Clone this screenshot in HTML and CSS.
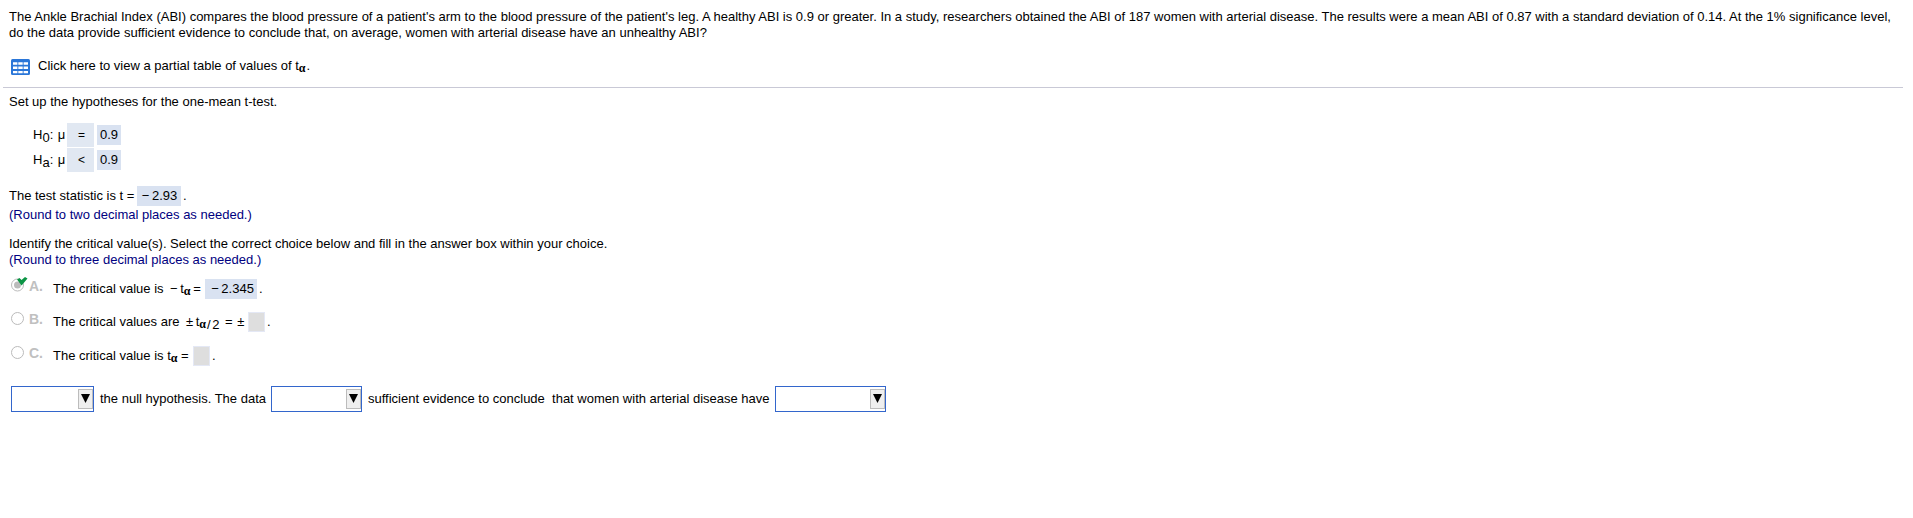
FILE: index.html
```html
<!DOCTYPE html>
<html lang="en">
  <head>
    <meta charset="utf-8">
    <title>One-mean t-test</title>
    <link rel="stylesheet" href="styles.css">
  </head>
  <body>
    <div class="problem">
      <p>The Ankle Brachial Index (ABI) compares the blood pressure of a patient's arm to the blood pressure of the patient's leg. A healthy ABI is 0.9 or greater. In a study, researchers obtained the ABI of 187 women with arterial disease. The results were a mean ABI of 0.87 with a standard deviation of 0.14. At the 1% significance level,<br>do the data provide sufficient evidence to conclude that, on average, women with arterial disease have an unhealthy ABI?</p>
      <div class="table-link">
        <svg class="table-icon" width="19" height="16" viewBox="0 0 19 16">
          <rect width="19" height="16" rx="1.5" fill="#2a76d8"/>
          <path fill="#fff" d="M2 3.300h4.400v2.400H2zM7.300 3.300h4.400v2.400H7.300zM12.600 3.300H17v2.400h-4.400zM2 7.600h4.400V10H2zM7.300 7.600h4.400V10H7.300zM12.600 7.600H17V10h-4.400zM2 11.900h4.400v2.400H2zM7.300 11.900h4.400v2.400H7.300zM12.600 11.900H17v2.400h-4.400z"/>
        </svg>
        <span>Click here to view a partial table of values of t<span class="sub alpha">α</span><span class="dot">.</span></span>
      </div>
    </div>

    <div class="work">
      <p>Set up the hypotheses for the one-mean t-test.</p>

      <div class="hypotheses">
        <div class="hyp">
          <span class="hyp-name">H<span class="sub">0</span>: μ</span>
          <span class="sign">=</span>
          <span class="answer">0.9</span>
        </div>
        <div class="hyp">
          <span class="hyp-name">H<span class="sub">a</span>: μ</span>
          <span class="sign">&lt;</span>
          <span class="answer">0.9</span>
        </div>
      </div>

      <div class="statistic">
        <span class="stat-text">The test statistic is t =</span>
        <span class="answer stat-answer">− 2.93</span>
        <span class="end">.</span>
      </div>
      <p class="hint">(Round to two decimal places as needed.)</p>

      <p class="identify">Identify the critical value(s). Select the correct choice below and fill in the answer box within your choice.</p>
      <p class="hint three">(Round to three decimal places as needed.)</p>

      <div class="choices">
        <div class="choice">
          <svg class="radio" width="18" height="18" viewBox="0 0 18 18">
            <circle cx="7.500" cy="9" r="6" fill="#fff" stroke="#bbb"/>
            <circle cx="7.500" cy="9" r="3.500" fill="#bbb"/>
            <path d="M7 3.500l2.500-1.600 2 2.200L15 1l2.500 1.400L11.600 9.500z" fill="#0b9444"/>
          </svg>
          <b class="letter">A.</b>
          <span class="choice-a">The critical value is</span>
          <span class="math-a">− t<span class="sub alpha">α</span> =</span>
          <span class="answer crit-answer">− 2.345</span>
          <span class="end">.</span>
        </div>
        <div class="choice choice-two">
          <svg class="radio" width="18" height="18" viewBox="0 0 18 18">
            <circle cx="7.500" cy="9.500" r="6" fill="#fff" stroke="#bbb"/>
          </svg>
          <b class="letter">B.</b>
          <span class="choice-b">The critical values are</span>
          <span class="math-b">± t<span class="sub alpha">α</span><span class="sub half">/2</span></span>
          <span class="equals-b">= ±</span>
          <span class="blank"></span>
          <span class="end">.</span>
        </div>
        <div class="choice">
          <svg class="radio" width="18" height="18" viewBox="0 0 18 18">
            <circle cx="7.500" cy="9.500" r="6" fill="#fff" stroke="#bbb"/>
          </svg>
          <b class="letter">C.</b>
          <span class="choice-c">The critical value is t<span class="sub alpha">α</span> =</span>
          <span class="blank"></span>
          <span class="end">.</span>
        </div>
      </div>

      <div class="conclusion">
        <span class="drop reject"><span class="arrow"><svg width="9" height="9"><path d="M0 0h9L4.500 9z"/></svg></span></span>
        <span class="null-text">the null hypothesis. The data</span>
        <span class="drop data"><span class="arrow"><svg width="9" height="9"><path d="M0 0h9L4.500 9z"/></svg></span></span>
        <span class="evidence-text">sufficient evidence to conclude&nbsp; that women with arterial disease have</span>
        <span class="drop abi"><span class="arrow"><svg width="9" height="9"><path d="M0 0h9L4.500 9z"/></svg></span></span>
      </div>
    </div>
  </body>
</html>
```
FILE: styles.css
```css
body {
  margin: 0;
  background: #fff;
  color: #000;
  font: 13px/16px "Liberation Sans", Arial, sans-serif;
  white-space: nowrap;
}
p {
  margin: 0;
}
.problem {
  height: 78px;
  margin: 0 10px 0 3px;
  padding: 9px 0 0 6px;
  border-bottom: 1px solid #c9c9d6;
}
.table-link {
  display: flex;
  margin-top: 17px;
}
.table-icon {
  margin: 1px 8px 0 2px;
}
.sub {
  position: relative;
  top: 3px;
}
.alpha {
  top: 2px;
  font: bold 12px/1 "Liberation Serif", serif;
}
.dot {
  margin-left: 1px;
}
.work {
  padding: 6px 0 0 9px;
}
.hypotheses {
  margin: 13px 0 0 24px;
}
.hyp {
  display: flex;
  height: 24px;
  margin-bottom: 1px;
  line-height: 24px;
}
.hyp-name {
  width: 34px;
  word-spacing: 1px;
}
.sign {
  box-sizing: border-box;
  width: 27px;
  height: 24px;
  margin-right: 3px;
  padding-left: 2px;
  background: #e1e8f2;
  font-size: 12px;
  text-align: center;
}
.answer {
  width: 24px;
  height: 20px;
  margin-top: 2px;
  background: #d9e2f1;
  line-height: 20px;
  text-align: center;
}
.statistic {
  display: flex;
  height: 22px;
  margin-top: 12px;
  line-height: 23px;
}
.stat-text {
  width: 128px;
}
.stat-answer {
  width: 44px;
  word-spacing: -1px;
  text-indent: 1px;
}
.end {
  margin-left: 2px;
}
.hint {
  margin-top: 1px;
  color: #000080;
}
.identify {
  margin-top: 13px;
}
.three {
  margin-top: 0;
}
.choices {
  margin-top: 9px;
}
.choice {
  display: flex;
  height: 22px;
  line-height: 23px;
}
.choice-two {
  margin: 11px 0 12px;
}
.radio {
  margin: -1px 1px 0 1px;
}
.letter {
  width: 24px;
  color: #c0c0c0;
  font-size: 14px;
  line-height: 18px;
}
.crit-answer {
  width: 52px;
  word-spacing: -1px;
  text-indent: 3px;
}
.choice-a {
  width: 117px;
}
.math-a {
  width: 35px;
  word-spacing: -1px;
}
.choice-b {
  width: 133px;
}
.math-b {
  width: 39px;
  word-spacing: -1px;
}
.half {
  margin-left: 1px;
  letter-spacing: 1.5px;
}
.equals-b {
  width: 23px;
  word-spacing: 1px;
}
.choice-c {
  width: 140px;
}
.blank {
  width: 15px;
  height: 18px;
  margin-top: 2px;
  border: 1px solid #e4e8f5;
  background: #dedede;
}
.conclusion {
  display: flex;
  height: 26px;
  margin: 20px 0 0 2px;
  line-height: 26px;
}
.drop {
  display: flex;
  justify-content: flex-end;
  box-sizing: border-box;
  height: 26px;
  border: 1px solid #3366cc;
}
.arrow {
  box-sizing: border-box;
  width: 15px;
  height: 20px;
  margin-top: 2px;
  padding: 4px 2px;
  border: 1px solid #bcbcbc;
  background: #efefef;
  line-height: 0;
}
.reject {
  width: 83px;
}
.data {
  width: 91px;
}
.abi {
  width: 111px;
}
.null-text {
  width: 171px;
  margin-left: 6px;
}
.evidence-text {
  width: 407px;
  margin-left: 6px;
}
```
